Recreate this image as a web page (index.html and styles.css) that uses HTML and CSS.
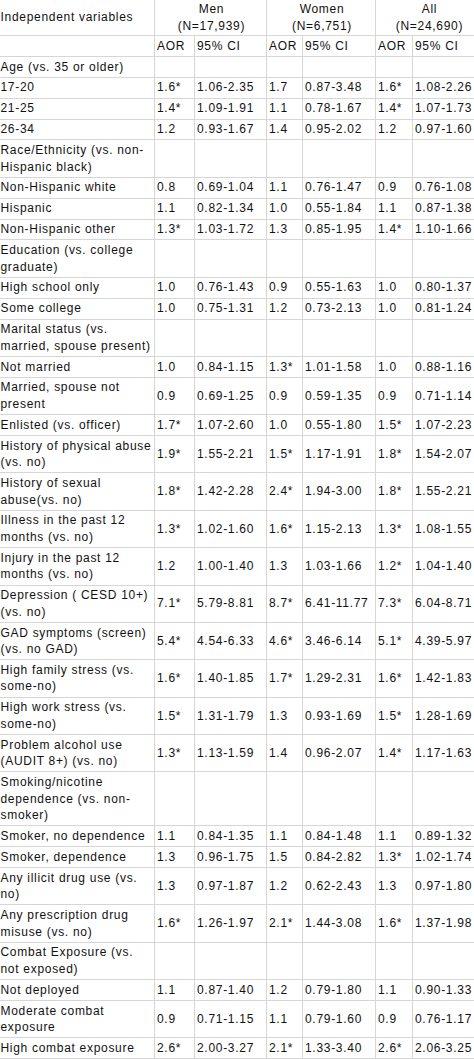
FILE: index.html
```html
<!DOCTYPE html>
<html lang="en">
<head>
<meta charset="utf-8">
<title>Adjusted odds ratios</title>
<link rel="stylesheet" href="styles.css">
</head>
<body>
<div class="frame">
<table class="or-table">
  <colgroup>
    <col class="c-var">
    <col class="c-aor1"><col class="c-ci1">
    <col class="c-aor2"><col class="c-ci2">
    <col class="c-aor3"><col class="c-ci3">
  </colgroup>
  <thead>
    <tr class="group-row">
      <th class="var-head">Independent variables</th>
      <th colspan="2" class="grp">Men<br>(N=17,939)</th>
      <th colspan="2" class="grp">Women<br>(N=6,751)</th>
      <th colspan="2" class="grp">All<br>(N=24,690)</th>
    </tr>
    <tr class="sub-row">
      <th class="var-head"></th>
      <th class="sub">AOR</th><th class="sub">95% CI</th>
      <th class="sub">AOR</th><th class="sub">95% CI</th>
      <th class="sub">AOR</th><th class="sub">95% CI</th>
    </tr>
  </thead>
  <tbody>
    <tr><td class="lbl">Age (vs. 35 or older)</td><td></td><td></td><td></td><td></td><td></td><td></td></tr>
    <tr><td class="lbl">17-20</td><td class="aor">1.6*</td><td class="ci">1.06-2.35</td><td class="aor">1.7</td><td class="ci">0.87-3.48</td><td class="aor">1.6*</td><td class="ci">1.08-2.26</td></tr>
    <tr><td class="lbl">21-25</td><td class="aor">1.4*</td><td class="ci">1.09-1.91</td><td class="aor">1.1</td><td class="ci">0.78-1.67</td><td class="aor">1.4*</td><td class="ci">1.07-1.73</td></tr>
    <tr><td class="lbl">26-34</td><td class="aor">1.2</td><td class="ci">0.93-1.67</td><td class="aor">1.4</td><td class="ci">0.95-2.02</td><td class="aor">1.2</td><td class="ci">0.97-1.60</td></tr>
    <tr><td class="lbl">Race/Ethnicity (vs. non-Hispanic black)</td><td></td><td></td><td></td><td></td><td></td><td></td></tr>
    <tr><td class="lbl">Non-Hispanic white</td><td class="aor">0.8</td><td class="ci">0.69-1.04</td><td class="aor">1.1</td><td class="ci">0.76-1.47</td><td class="aor">0.9</td><td class="ci">0.76-1.08</td></tr>
    <tr><td class="lbl">Hispanic</td><td class="aor">1.1</td><td class="ci">0.82-1.34</td><td class="aor">1.0</td><td class="ci">0.55-1.84</td><td class="aor">1.1</td><td class="ci">0.87-1.38</td></tr>
    <tr><td class="lbl">Non-Hispanic other</td><td class="aor">1.3*</td><td class="ci">1.03-1.72</td><td class="aor">1.3</td><td class="ci">0.85-1.95</td><td class="aor">1.4*</td><td class="ci">1.10-1.66</td></tr>
    <tr><td class="lbl">Education (vs. college graduate)</td><td></td><td></td><td></td><td></td><td></td><td></td></tr>
    <tr><td class="lbl">High school only</td><td class="aor">1.0</td><td class="ci">0.76-1.43</td><td class="aor">0.9</td><td class="ci">0.55-1.63</td><td class="aor">1.0</td><td class="ci">0.80-1.37</td></tr>
    <tr><td class="lbl">Some college</td><td class="aor">1.0</td><td class="ci">0.75-1.31</td><td class="aor">1.2</td><td class="ci">0.73-2.13</td><td class="aor">1.0</td><td class="ci">0.81-1.24</td></tr>
    <tr><td class="lbl">Marital status (vs. married, spouse present)</td><td></td><td></td><td></td><td></td><td></td><td></td></tr>
    <tr><td class="lbl">Not married</td><td class="aor">1.0</td><td class="ci">0.84-1.15</td><td class="aor">1.3*</td><td class="ci">1.01-1.58</td><td class="aor">1.0</td><td class="ci">0.88-1.16</td></tr>
    <tr><td class="lbl">Married, spouse not present</td><td class="aor">0.9</td><td class="ci">0.69-1.25</td><td class="aor">0.9</td><td class="ci">0.59-1.35</td><td class="aor">0.9</td><td class="ci">0.71-1.14</td></tr>
    <tr><td class="lbl">Enlisted (vs. officer)</td><td class="aor">1.7*</td><td class="ci">1.07-2.60</td><td class="aor">1.0</td><td class="ci">0.55-1.80</td><td class="aor">1.5*</td><td class="ci">1.07-2.23</td></tr>
    <tr><td class="lbl">History of physical abuse (vs. no)</td><td class="aor">1.9*</td><td class="ci">1.55-2.21</td><td class="aor">1.5*</td><td class="ci">1.17-1.91</td><td class="aor">1.8*</td><td class="ci">1.54-2.07</td></tr>
    <tr><td class="lbl">History of sexual abuse(vs. no)</td><td class="aor">1.8*</td><td class="ci">1.42-2.28</td><td class="aor">2.4*</td><td class="ci">1.94-3.00</td><td class="aor">1.8*</td><td class="ci">1.55-2.21</td></tr>
    <tr><td class="lbl">Illness in the past 12 months (vs. no)</td><td class="aor">1.3*</td><td class="ci">1.02-1.60</td><td class="aor">1.6*</td><td class="ci">1.15-2.13</td><td class="aor">1.3*</td><td class="ci">1.08-1.55</td></tr>
    <tr><td class="lbl">Injury in the past 12 months (vs. no)</td><td class="aor">1.2</td><td class="ci">1.00-1.40</td><td class="aor">1.3</td><td class="ci">1.03-1.66</td><td class="aor">1.2*</td><td class="ci">1.04-1.40</td></tr>
    <tr><td class="lbl">Depression ( CESD 10+) (vs. no)</td><td class="aor">7.1*</td><td class="ci">5.79-8.81</td><td class="aor">8.7*</td><td class="ci">6.41-11.77</td><td class="aor">7.3*</td><td class="ci">6.04-8.71</td></tr>
    <tr><td class="lbl">GAD symptoms (screen) (vs. no GAD)</td><td class="aor">5.4*</td><td class="ci">4.54-6.33</td><td class="aor">4.6*</td><td class="ci">3.46-6.14</td><td class="aor">5.1*</td><td class="ci">4.39-5.97</td></tr>
    <tr><td class="lbl">High family stress (vs. some-no)</td><td class="aor">1.6*</td><td class="ci">1.40-1.85</td><td class="aor">1.7*</td><td class="ci">1.29-2.31</td><td class="aor">1.6*</td><td class="ci">1.42-1.83</td></tr>
    <tr><td class="lbl">High work stress (vs. some-no)</td><td class="aor">1.5*</td><td class="ci">1.31-1.79</td><td class="aor">1.3</td><td class="ci">0.93-1.69</td><td class="aor">1.5*</td><td class="ci">1.28-1.69</td></tr>
    <tr><td class="lbl">Problem alcohol use (AUDIT 8+) (vs. no)</td><td class="aor">1.3*</td><td class="ci">1.13-1.59</td><td class="aor">1.4</td><td class="ci">0.96-2.07</td><td class="aor">1.4*</td><td class="ci">1.17-1.63</td></tr>
    <tr><td class="lbl">Smoking/nicotine dependence (vs. non-smoker)</td><td></td><td></td><td></td><td></td><td></td><td></td></tr>
    <tr><td class="lbl">Smoker, no dependence</td><td class="aor">1.1</td><td class="ci">0.84-1.35</td><td class="aor">1.1</td><td class="ci">0.84-1.48</td><td class="aor">1.1</td><td class="ci">0.89-1.32</td></tr>
    <tr><td class="lbl">Smoker, dependence</td><td class="aor">1.3</td><td class="ci">0.96-1.75</td><td class="aor">1.5</td><td class="ci">0.84-2.82</td><td class="aor">1.3*</td><td class="ci">1.02-1.74</td></tr>
    <tr><td class="lbl">Any illicit drug use (vs. no)</td><td class="aor">1.3</td><td class="ci">0.97-1.87</td><td class="aor">1.2</td><td class="ci">0.62-2.43</td><td class="aor">1.3</td><td class="ci">0.97-1.80</td></tr>
    <tr><td class="lbl">Any prescription drug misuse (vs. no)</td><td class="aor">1.6*</td><td class="ci">1.26-1.97</td><td class="aor">2.1*</td><td class="ci">1.44-3.08</td><td class="aor">1.6*</td><td class="ci">1.37-1.98</td></tr>
    <tr><td class="lbl">Combat Exposure (vs. not exposed)</td><td></td><td></td><td></td><td></td><td></td><td></td></tr>
    <tr><td class="lbl">Not deployed</td><td class="aor">1.1</td><td class="ci">0.87-1.40</td><td class="aor">1.2</td><td class="ci">0.79-1.80</td><td class="aor">1.1</td><td class="ci">0.90-1.33</td></tr>
    <tr><td class="lbl">Moderate combat exposure</td><td class="aor">0.9</td><td class="ci">0.71-1.15</td><td class="aor">1.1</td><td class="ci">0.79-1.60</td><td class="aor">0.9</td><td class="ci">0.76-1.17</td></tr>
    <tr><td class="lbl">High combat exposure</td><td class="aor">2.6*</td><td class="ci">2.00-3.27</td><td class="aor">2.1*</td><td class="ci">1.33-3.40</td><td class="aor">2.6*</td><td class="ci">2.06-3.25</td></tr>
  </tbody>
</table>
</div>
</body>
</html>
```
FILE: styles.css
```css
html, body {
  margin: 0;
  padding: 0;
  background: #ffffff;
}

.frame {
  width: 474px;
  overflow: hidden;
}

.or-table {
  width: 482px;
  table-layout: fixed;
  border-collapse: separate;
  border-spacing: 0;
  font-family: "Liberation Sans", Arial, sans-serif;
  color: #111111;
  font-size: 12px;
  letter-spacing: 0.7px;
  line-height: 16.5px;
}

.c-var { width: 155px; }
.c-aor1 { width: 40px; }
.c-ci1 { width: 72px; }
.c-aor2 { width: 36px; }
.c-ci2 { width: 73px; }
.c-aor3 { width: 37px; }
.c-ci3 { width: 69px; }

.or-table th,
.or-table td {
  box-sizing: border-box;
  padding: 1.7px 0 1.7px 2px;
  border-right: 1px solid #d6d6d6;
  border-bottom: 1px solid #d6d6d6;
  font-weight: normal;
  text-align: left;
  vertical-align: middle;
  white-space: nowrap;
  overflow: hidden;
}

.or-table .lbl,
.or-table .var-head {
  padding-left: 0.5px;
  padding-right: 1px;
  white-space: normal;
  vertical-align: top;
}

.or-table .var-head {
  vertical-align: middle;
}

.group-row th {
  height: 36px;
  padding-top: 1px;
  padding-bottom: 1px;
}

.or-table .grp {
  text-align: center;
}
```
